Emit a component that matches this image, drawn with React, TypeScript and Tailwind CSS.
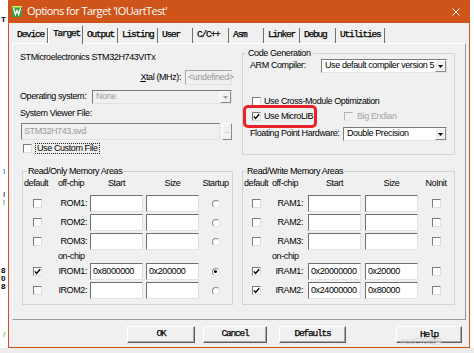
import React from "react";

const mono = "font-['Liberation_Mono',monospace] text-[9.5px] tracking-[-1.2px] [-webkit-text-stroke:0.25px_#000]";

const Check = ({ checked = false, disabled = false }: { checked?: boolean; disabled?: boolean }) => (
  <span
    className={
      disabled
        ? "flex h-[9px] w-[9px] shrink-0 items-center justify-center border border-t-[#b4b4b4] border-l-[#b4b4b4] border-r-[#ececec] border-b-[#ececec] bg-[#f0f0f0]"
        : "flex h-[9px] w-[9px] shrink-0 items-center justify-center border border-t-[#7a7a7a] border-l-[#7a7a7a] border-r-[#dedede] border-b-[#dedede] bg-white"
    }
  >
    {checked && (
      <svg width="7" height="7" viewBox="0 0 7 7">
        <polyline points="0.8,3.4 2.6,5.4 6.2,1.2" fill="none" stroke="#000" strokeWidth="1.4" />
      </svg>
    )}
  </span>
);

const Radio = ({ on = false }: { on?: boolean }) => (
  <span className="flex h-[8px] w-[8px] items-center justify-center rounded-full border border-t-[#8a8a8a] border-l-[#8a8a8a] border-r-[#e6e6e6] border-b-[#e6e6e6] bg-white">
    {on && <span className="h-[3px] w-[3px] rounded-full bg-black" />}
  </span>
);

const Field = ({ value = "", w }: { value?: string; w: string }) => (
  <div
    className={`flex h-[17px] ${w} items-center border border-t-[#6f6f6f] border-l-[#6f6f6f] border-r-[#e2e2e2] border-b-[#e2e2e2] bg-white pl-[2px]`}
  >
    {value}
  </div>
);

const Arrow = ({ disabled = false }: { disabled?: boolean }) => (
  <span className="flex h-full w-[11px] items-center justify-center border border-t-white border-l-white border-r-[#8a8a8a] border-b-[#8a8a8a] bg-[#f0f0f0]">
    <svg width="5" height="3" viewBox="0 0 5 3">
      <polygon points="0,0 5,0 2.5,3" fill={disabled ? "#a0a0a0" : "#000"} />
    </svg>
  </span>
);

const Select = ({ value, w, disabled = false }: { value: string; w: string; disabled?: boolean }) => (
  <div
    className={`flex h-[14px] ${w} items-stretch border border-t-[#7a7a7a] border-l-[#7a7a7a] border-r-[#e2e2e2] border-b-[#e2e2e2] ${
      disabled ? "bg-[#f0f0f0] text-[#a0a0a0]" : "bg-white"
    }`}
  >
    <span className="flex flex-1 items-center pl-[3px]">{value}</span>
    <Arrow disabled={disabled} />
  </div>
);

const tabs = [
  { label: "Device", w: "w-[35px]" },
  { label: "Target", w: "w-[35px]", active: true },
  { label: "Output", w: "w-[35px]" },
  { label: "Listing", w: "w-[40px]" },
  { label: "User", w: "w-[35px]" },
  { label: "C/C++", w: "w-[36px]" },
  { label: "Asm", w: "w-[35px]" },
  { label: "Linker", w: "w-[36px]" },
  { label: "Debug", w: "w-[36px]" },
  { label: "Utilities", w: "w-[49px]" },
];

const romRows = [
  { label: "ROM1:", start: "", size: "", def: false, on: false },
  { label: "ROM2:", start: "", size: "", def: false, on: false },
  { label: "ROM3:", start: "", size: "", def: false, on: false },
];
const iromRows = [
  { label: "IROM1:", start: "0x8000000", size: "0x200000", def: true, on: true },
  { label: "IROM2:", start: "", size: "", def: false, on: false },
];
const ramRows = [
  { label: "RAM1:", start: "", size: "", def: false },
  { label: "RAM2:", start: "", size: "", def: false },
  { label: "RAM3:", start: "", size: "", def: false },
];
const iramRows = [
  { label: "IRAM1:", start: "0x20000000", size: "0x20000", def: true },
  { label: "IRAM2:", start: "0x24000000", size: "0x80000", def: true },
];

const TitleBar = () => (
  <div className="flex h-[23px] shrink-0 items-center bg-[#cf5419] pl-[3px] pr-[9px]">
    <svg width="10" height="11" viewBox="0 0 10 11">
      <rect x="0" y="0" width="10" height="11" fill="#3b9a3f" />
      <path d="M1.5 2 L3.3 8.5 L5 4.5 L6.7 8.5 L8.5 2" fill="none" stroke="#fff" strokeWidth="1.3" />
      <rect x="0" y="0" width="10" height="1.5" fill="#d8e86a" />
    </svg>
    <span className="ml-[5px] font-['Open_Sans',sans-serif] text-[11px] tracking-[-0.55px] text-white">
      Options for Target 'IOUartTest'
    </span>
    <svg className="ml-auto" width="8" height="8" viewBox="0 0 8 8">
      <path d="M0.5 0.5 L7.5 7.5 M7.5 0.5 L0.5 7.5" stroke="#fff" strokeWidth="1" />
    </svg>
  </div>
);

const TabStrip = () => (
  <div className={`flex h-[20px] shrink-0 items-end pl-[4px] ${mono}`}>
    {tabs.map((t) =>
      t.active ? (
        <div
          key={t.label}
          className={`relative z-10 -mb-px flex h-[19px] ${t.w} items-center border-t border-l border-r border-t-white border-l-white border-r-[#6f6f6f] bg-[#f0f0f0] pb-[2px] pl-[4px]`}
        >
          {t.label}
        </div>
      ) : (
        <div
          key={t.label}
          className={`flex h-[15px] ${t.w} items-center border-r border-r-[#6f6f6f] pl-[4px]`}
        >
          {t.label}
        </div>
      )
    )}
  </div>
);

const Panel = () => (
  <div className="ml-[3px] flex h-[277px] w-[454px] shrink-0 flex-col border border-t-white border-l-white border-r-[#9a9a9a] border-b-[#9a9a9a]">
    <div className="flex pl-[7px]">
      <div className="flex w-[213px] flex-col">
        <div className="mt-[7px] flex h-[14px] items-center">STMicroelectronics STM32H743VITx</div>
        <div className="mt-[5px] flex h-[15px] items-center justify-end pr-[1px]">
          <span>
            <span className="underline">X</span>tal (MHz):
          </span>
          <div className="ml-[4px] flex h-[15px] w-[47px] items-center border border-t-[#a8a8a8] border-l-[#a8a8a8] border-r-[#e2e2e2] border-b-[#e2e2e2] bg-[#f0f0f0] pl-[2px] text-[#9a9a9a]">
            &lt;undefined&gt;
          </div>
        </div>
        <div className="mt-[5px] flex h-[14px] items-center pr-[1px]">
          <span>Operating system:</span>
          <div className="ml-auto">
            <Select value="None" w="w-[140px]" disabled />
          </div>
        </div>
        <div className="mt-[4px] flex h-[12px] items-center">System Viewer File:</div>
        <div className="mt-[3px] flex h-[17px]">
          <div className="ml-[1px] flex h-[17px] w-[199px] items-center border border-t-[#7a7a7a] border-l-[#7a7a7a] border-r-[#e2e2e2] border-b-[#e2e2e2] bg-[#f0f0f0] pl-[2px] text-[#9a9a9a]">
            STM32H743.svd
          </div>
          <div className="ml-[2px] flex h-[17px] w-[10px] items-end justify-center border border-t-white border-l-white border-r-[#8a8a8a] border-b-[#8a8a8a] pb-[3px] text-[7px] text-[#9a9a9a]">
            ...
          </div>
        </div>
        <div className="mt-[3px] flex h-[11px] items-center pl-[3px]">
          <Check />
          <span className="ml-[3px] flex h-[11px] items-center border border-dotted border-[#222] px-[1px]">
            Use Custom File
          </span>
        </div>
      </div>

      <fieldset className="ml-[9px] mt-[3px] h-[108px] w-[213px] border border-[#d2d2d2]">
        <legend className="ml-[3px] px-[2px] leading-[12px]">Code Generation</legend>
        <div className="flex h-[14px] items-center px-[7px]">
          <span>ARM Compiler:</span>
          <div className="ml-auto">
            <Select value="Use default compiler version 5" w="w-[126px]" />
          </div>
        </div>
        <div className="mt-[23px] flex h-[11px] items-center gap-[3px] pl-[9px]">
          <Check />
          <span>Use Cross-Module Optimization</span>
        </div>
        <div className="mt-[4px] flex h-[11px] items-center">
          <div className="-my-[6px] flex w-[74px] items-center gap-[3px] rounded-[5px] border-[3px] border-[#e8232a] py-[3px] pl-[6px]">
            <Check checked />
            <span className="leading-[11px]">Use MicroLIB</span>
          </div>
          <div className="ml-[27px] flex items-center gap-[4px] text-[#a6a6a6]">
            <Check disabled />
            <span>Big Endian</span>
          </div>
        </div>
        <div className="mt-[5px] flex h-[14px] items-center px-[7px]">
          <span>Floating Point Hardware:</span>
          <div className="ml-auto">
            <Select value="Double Precision" w="w-[104px]" />
          </div>
        </div>
      </fieldset>
    </div>

    <div className="mt-[10px] flex pl-[9px]">
      <fieldset className="h-[140px] w-[211px] border border-[#d2d2d2]">
        <legend className="ml-[4px] px-[1px] leading-[12px]">Read/Only Memory Areas</legend>
        <div className="mt-[1px] flex h-[12px] items-center">
          <span className="w-[33px] pl-[1px]">default</span>
          <span className="w-[32px] pl-[2px]">off-chip</span>
          <span className="ml-[2px] w-[53px] text-center">Start</span>
          <span className="ml-[3px] w-[53px] text-center">Size</span>
          <span className="w-[33px] text-center">Startup</span>
        </div>
        <div className="mt-[5px] flex flex-col gap-[2px]">
          {romRows.map((r) => (
            <RomRow key={r.label} {...r} />
          ))}
        </div>
        <div className="mt-[1px] flex h-[11px] items-center">
          <span className="w-[33px]" />
          <span className="pl-[2px]">on-chip</span>
        </div>
        <div className="mt-[1px] flex flex-col gap-[2px]">
          {iromRows.map((r) => (
            <RomRow key={r.label} {...r} />
          ))}
        </div>
      </fieldset>

      <fieldset className="ml-[9px] h-[140px] w-[213px] border border-[#d2d2d2]">
        <legend className="ml-[3px] px-[1px] leading-[12px]">Read/Write Memory Areas</legend>
        <div className="mt-[1px] flex h-[12px] items-center">
          <span className="w-[27px] pl-[1px]">default</span>
          <span className="w-[36px] pl-[2px]">off-chip</span>
          <span className="ml-[2px] w-[53px] text-center">Start</span>
          <span className="ml-[4px] w-[53px] text-center">Size</span>
          <span className="w-[36px] text-center">NoInit</span>
        </div>
        <div className="mt-[5px] flex flex-col gap-[2px]">
          {ramRows.map((r) => (
            <RamRow key={r.label} {...r} />
          ))}
        </div>
        <div className="mt-[1px] flex h-[11px] items-center">
          <span className="w-[27px]" />
          <span className="pl-[2px]">on-chip</span>
        </div>
        <div className="mt-[1px] flex flex-col gap-[2px]">
          {iramRows.map((r) => (
            <RamRow key={r.label} {...r} />
          ))}
        </div>
      </fieldset>
    </div>
  </div>
);

function RomRow({ label, start, size, def, on }: { label: string; start: string; size: string; def: boolean; on: boolean }) {
  return (
    <div className="flex h-[17px] items-center">
      <span className="flex w-[33px] pl-[10px]">
        <Check checked={def} />
      </span>
      <span className="w-[32px] pr-[1px] text-right">{label}</span>
      <span className="ml-[2px]">
        <Field value={start} w="w-[53px]" />
      </span>
      <span className="ml-[3px]">
        <Field value={size} w="w-[53px]" />
      </span>
      <span className="flex w-[33px] justify-center">
        <Radio on={on} />
      </span>
    </div>
  );
}

function RamRow({ label, start, size, def }: { label: string; start: string; size: string; def: boolean }) {
  return (
    <div className="flex h-[17px] items-center">
      <span className="flex w-[27px] pl-[9px]">
        <Check checked={def} />
      </span>
      <span className="w-[36px] pr-[3px] text-right">{label}</span>
      <span className="ml-[2px]">
        <Field value={start} w="w-[53px]" />
      </span>
      <span className="ml-[4px]">
        <Field value={size} w="w-[53px]" />
      </span>
      <span className="flex w-[36px] justify-center">
        <Check />
      </span>
    </div>
  );
}

const btn =
  "flex h-[17px] items-center justify-center border border-t-white border-l-white border-r-[#5e5e5e] border-b-[#5e5e5e] bg-[#f0f0f0] shadow-[inset_-1px_-1px_0_#a8a8a8]";

const ButtonRow = () => (
  <div className={`mt-[6px] flex ${mono}`}>
    <div className={`ml-[118px] w-[68px] ${btn}`}>OK</div>
    <div className={`ml-[8px] w-[64px] ${btn}`}>Cancel</div>
    <div className={`ml-[12px] w-[67px] ${btn}`}>Defaults</div>
    <div className={`relative ml-[50px] w-[66px] items-start pt-[1px] ${btn}`}>
      Help
      <span className="absolute left-[3px] top-[10px] font-['Noto_Sans_CJK_SC',sans-serif] text-[7px] leading-[8px] tracking-normal text-[#cfcfcf] [-webkit-text-stroke:0px]">
        @51CTO博客
      </span>
    </div>
  </div>
);

const LeftEdge = () => (
  <div className="flex w-[8px] flex-col overflow-hidden bg-white text-[8px] leading-none">
    <span className="mt-[16px] pl-[1px] font-bold">T</span>
    <span className="mt-[144px] pl-[3px] text-[#2a3fd0]">I</span>
    <span className="mt-[15px] pl-[3px]">I</span>
    <span className="pl-[3px] text-[#2f8f3a]">l</span>
    <span className="mt-[60px] pl-[1px] font-bold">8</span>
    <span className="pl-[1px] font-bold">0</span>
    <span className="pl-[1px] font-bold">8</span>
    <span className="mt-[40px] pl-[3px] text-[#2f8f3a]">/</span>
  </div>
);

export default function App() {
  return (
    <div className="flex h-[353px] w-[474px] flex-col overflow-hidden bg-white font-['Liberation_Sans',Arial,sans-serif] text-[9px] tracking-[-0.4px] text-black">
      <div className="flex h-[348px] shrink-0">
        <LeftEdge />
        <div className="flex w-[462px] flex-col border-x border-b border-[#cf5419] bg-[#f0f0f0]">
          <TitleBar />
          <TabStrip />
          <Panel />
          <ButtonRow />
        </div>
        <div className="w-[4px] bg-white" />
      </div>
      <div className="h-[5px] bg-[#ececec]" />
    </div>
  );
}
